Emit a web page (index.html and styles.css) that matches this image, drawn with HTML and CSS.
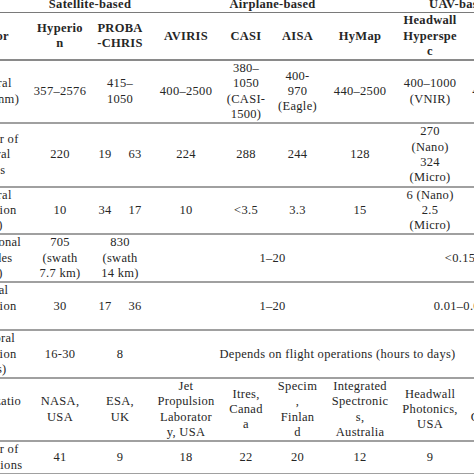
FILE: index.html
```html
<!DOCTYPE html>
<html>
<head>
<meta charset="utf-8">
<link rel="stylesheet" href="styles.css">
</head>
<body>
<table class="sensors">
<colgroup>
<col class="c-param"><col class="c-hyp"><col class="c-sub"><col class="c-sub"><col class="c-aviris"><col class="c-casi"><col class="c-aisa"><col class="c-hymap"><col class="c-head"><col class="c-next">
</colgroup>
<thead>
<tr class="groups">
<th></th>
<th colspan="3">Satellite-based</th>
<th colspan="4">Airplane-based</th>
<th colspan="2">UAV-based</th>
</tr>
<tr class="names">
<th>Sensor</th>
<th>Hyperio<br>n</th>
<th colspan="2">PROBA<br>-CHRIS</th>
<th>AVIRIS</th>
<th>CASI</th>
<th>AISA</th>
<th>HyMap</th>
<th>Headwall<br>Hyperspe<br>c</th>
<th>UHD</th>
</tr>
</thead>
<tbody>
<tr>
<td>Spectral<br>range (nm)</td>
<td>357–2576</td>
<td colspan="2">415–<br>1050</td>
<td>400–2500</td>
<td>380–<br>1050<br>(CASI-<br>1500)</td>
<td>400-<br>970<br>(Eagle)</td>
<td>440–2500</td>
<td>400–1000<br>(VNIR)</td>
<td>450–950</td>
</tr>
<tr>
<td>Number of<br>spectral<br>bands</td>
<td>220</td>
<td>19</td>
<td>63</td>
<td>224</td>
<td>288</td>
<td>244</td>
<td>128</td>
<td>270<br>(Nano)<br>324<br>(Micro)</td>
<td></td>
</tr>
<tr>
<td>Spectral<br>resolution<br>(nm)</td>
<td>10</td>
<td>34</td>
<td>17</td>
<td>10</td>
<td>&lt;3.5</td>
<td>3.3</td>
<td>15</td>
<td>6 (Nano)<br>2.5<br>(Micro)</td>
<td></td>
</tr>
<tr>
<td>Operational<br>altitudes<br>(km)</td>
<td>705<br>(swath<br>7.7 km)</td>
<td colspan="2">830<br>(swath<br>14 km)</td>
<td colspan="4">1–20</td>
<td colspan="2">&lt;0.15</td>
</tr>
<tr>
<td>Spatial<br>resolution<br>(m)</td>
<td>30</td>
<td>17</td>
<td>36</td>
<td colspan="4">1–20</td>
<td colspan="2">0.01–0.05</td>
</tr>
<tr>
<td>Temporal<br>resolution<br>(days)</td>
<td>16-30</td>
<td colspan="2">8</td>
<td colspan="6">Depends on flight operations (hours to days)</td>
</tr>
<tr>
<td>Organizatio<br>n</td>
<td>NASA,<br>USA</td>
<td colspan="2">ESA,<br>UK</td>
<td>Jet<br>Propulsion<br>Laborator<br>y, USA</td>
<td>Itres,<br>Canad<br>a</td>
<td>Specim<br>,<br>Finlan<br>d</td>
<td>Integrated<br>Spectronic<br>s,<br>Australia</td>
<td>Headwall<br>Photonics,<br>USA</td>
<td>Cubert,<br>Germany</td>
</tr>
<tr>
<td>Number of<br>publications</td>
<td>41</td>
<td colspan="2">9</td>
<td>18</td>
<td>22</td>
<td>20</td>
<td>12</td>
<td>9</td>
<td></td>
</tr>
</tbody>
</table>
</body>
</html>
```

FILE: styles.css
```css
html, body {
  margin: 0;
  padding: 0;
  background: #ffffff;
  overflow: hidden;
  width: 474px;
  height: 474px;
}

.sensors {
  margin-left: -50px;
  margin-top: -3px;
  border-collapse: collapse;
  table-layout: fixed;
  width: 575px;
  font-family: "Liberation Serif", "Times New Roman", serif;
  font-size: 12.5px;
  line-height: 15.3px;
  letter-spacing: 0.3px;
  color: #262626;
}

.c-param { width: 80px; }
.c-hyp { width: 60px; }
.c-sub { width: 30px; }
.c-aviris { width: 72px; }
.c-casi { width: 48px; }
.c-aisa { width: 55px; }
.c-hymap { width: 70px; }
.c-head { width: 70px; }
.c-next { width: 60px; }

.sensors th,
.sensors td {
  padding: 0;
  text-align: center;
  vertical-align: middle;
  white-space: nowrap;
  overflow: visible;
}

.sensors th {
  font-weight: bold;
}

.groups th {
  border-bottom: 1px solid #7a7a7a;
  height: 15px;
}

.names th {
  border-bottom: 2px solid #8a8a8a;
  height: 45px;
}

.sensors tbody td {
  border-bottom: 2px solid #a0a0a0;
}
```
